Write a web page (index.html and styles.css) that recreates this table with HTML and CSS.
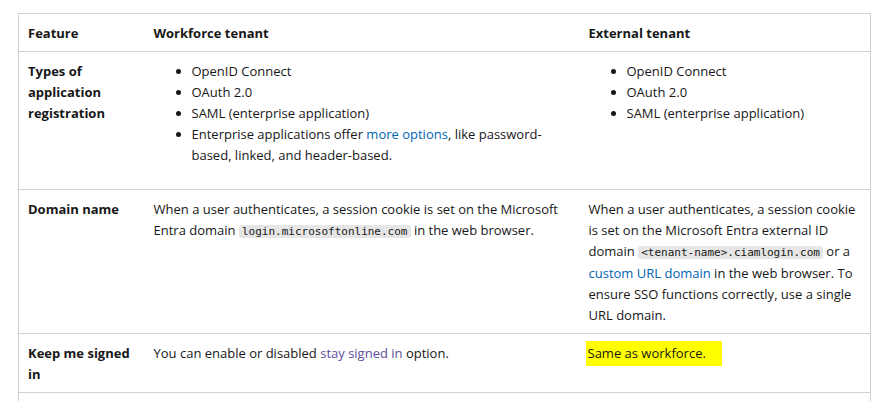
FILE: index.html
```html
<!DOCTYPE html>
<html lang="en">
<head>
  <meta charset="UTF-8" />
  <title>Workforce vs external tenant</title>
  <link rel="stylesheet" href="styles.css">
</head>
<body>
  <div class="wrap">
    <table class="compare">
      <colgroup>
        <col class="col-feature">
        <col class="col-workforce">
        <col class="col-external">
      </colgroup>
      <thead>
        <tr>
          <th>Feature</th>
          <th>Workforce tenant</th>
          <th>External tenant</th>
        </tr>
      </thead>
      <tbody>
        <tr>
          <td><strong>Types of application registration</strong></td>
          <td>
            <ul>
              <li>OpenID Connect</li>
              <li>OAuth 2.0</li>
              <li>SAML (enterprise application)</li>
              <li>Enterprise applications offer <a href="#">more options</a>, like password-based, linked, and header-based.</li>
            </ul>
          </td>
          <td>
            <ul>
              <li>OpenID Connect</li>
              <li>OAuth 2.0</li>
              <li>SAML (enterprise application)</li>
            </ul>
          </td>
        </tr>
        <tr>
          <td><strong>Domain name</strong></td>
          <td>When a user authenticates, a session cookie is set on the Microsoft Entra domain <code>login.microsoftonline.com</code> in the web browser.</td>
          <td>When a user authenticates, a session cookie is set on the Microsoft Entra external ID domain <code>&lt;tenant-name&gt;.ciamlogin.com</code> or a <a href="#">custom URL domain</a> in the web browser. To ensure SSO functions correctly, use a single URL domain.</td>
        </tr>
        <tr>
          <td><strong>Keep me signed in</strong></td>
          <td>You can enable or disabled <a href="#" class="visited">stay signed in</a> option.</td>
          <td><span class="marker">Same as workforce.</span></td>
        </tr>
        <tr>
          <td>&nbsp;</td>
          <td></td>
          <td></td>
        </tr>
      </tbody>
    </table>
  </div>
</body>
</html>
```

FILE: styles.css
```css
body {
  margin: 0;
  background: #ffffff;
  font-family: "Segoe UI", "Open Sans", sans-serif;
  font-size: 13px;
  line-height: 21px;
  color: #171717;
}
.wrap {
  padding: 13px 0 0 18px;
}
.compare {
  border-collapse: collapse;
  table-layout: fixed;
  width: 852px;
  border: 1px solid #d1d1d1;
}
.col-feature { width: 126px; }
.col-workforce { width: 435px; }
.col-external { width: 291px; }
th, td {
  text-align: left;
  vertical-align: top;
  padding: 9px 9px 7px 9px;
  border-bottom: 1px solid #d1d1d1;
}
th {
  font-weight: 700;
}
td strong {
  font-weight: 700;
}
ul {
  margin: 0 0 16px;
  padding-left: 38px;
}
a {
  color: #0065b3;
  text-decoration: none;
}
a.visited {
  color: #5c4d9a;
}
code {
  font-family: "DejaVu Sans Mono", monospace;
  font-size: 11px;
  background: #e6e6e6;
  border-radius: 3px;
  padding: 0 3px;
}
.marker {
  background: #ffff00;
  padding: 3px 16px 4px 2px;
  margin-left: -3px;
}
```
